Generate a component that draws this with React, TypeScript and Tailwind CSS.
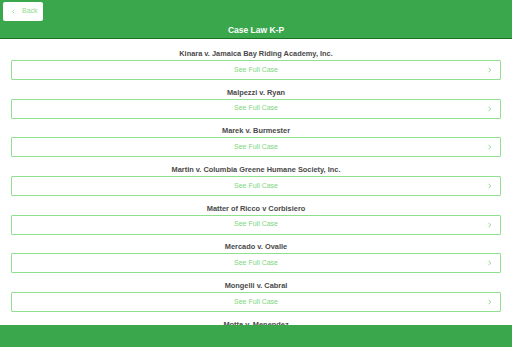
const cases = [
  "Kinara v. Jamaica Bay Riding Academy, Inc.",
  "Malpezzi v. Ryan",
  "Marek v. Burmester",
  "Martin v. Columbia Greene Humane Society, Inc.",
  "Matter of Ricco v Corbisiero",
  "Mercado v. Ovalle",
  "Mongelli v. Cabral",
  "Motta v. Menendez",
  "Nelson v. Lundy",
];

export default function App() {
  return (
    <div
      className="relative h-[347px] w-[512px] overflow-hidden bg-white"
      style={{ fontFamily: '"Liberation Sans", Arial, sans-serif' }}
    >
      <header className="h-[39px] bg-[#3aa74d] border-b-[1.5px] border-[#17731f] relative">
        <button className="absolute left-[3px] top-[2px] h-[19px] w-[40px] rounded-[2px] bg-white flex items-center gap-[6px] pl-[8px] text-[7px] text-[#8fdc8f]">
          <svg className="w-[5px] h-[5px]" viewBox="0 0 10 10" fill="none" stroke="currentColor" strokeWidth={1.8}>
            <path d="M6.5 1.5 3 5l3.5 3.5" />
          </svg>
          Back
        </button>
        <h1 className="absolute inset-x-0 bottom-[3px] text-center text-[8.5px] font-bold leading-[10px] text-white">
          Case Law K-P
        </h1>
      </header>

      <div className="pt-[2.33px] px-[11px]">
        {cases.map((c) => (
          <div key={c}>
            <div className="h-[18.67px] flex items-end justify-center pb-[2px]">
              <span className="text-[7.4px] font-bold leading-[9px] text-[#4a4a4a]">{c}</span>
            </div>
            <div className="relative h-[20px] border border-[#8fe08f] rounded-[1px] flex items-center justify-center text-[7px] text-[#7dd67d]">
              See Full Case
              <svg
                className="absolute right-[8px] top-[6px] w-[5px] h-[6px]"
                viewBox="0 0 10 12"
                fill="none"
                stroke="#7dd67d"
                strokeWidth={1.8}
              >
                <path d="M3 1.5 7.5 6 3 10.5" />
              </svg>
            </div>
          </div>
        ))}
      </div>

      <footer className="absolute left-0 right-0 bottom-0 h-[22px] bg-[#3aa74d]" />
    </div>
  );
}
